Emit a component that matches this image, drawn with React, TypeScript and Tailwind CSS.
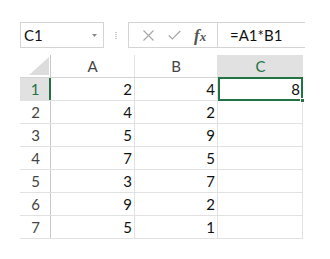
import React from "react";

const rows: [number, number][] = [
  [2, 4],
  [4, 2],
  [5, 9],
  [7, 5],
  [3, 7],
  [9, 2],
  [5, 1],
];

const font = { fontFamily: "Lato, 'Open Sans', sans-serif" };

const Toolbar: React.FC = () => (
  <div className="flex items-center h-[26px]">
    <div className="w-[84px] h-[26px] border border-[#d4d4d4] flex items-center justify-between pl-[3px] pr-[6px] text-[15px] text-[#111]">
      <span>C1</span>
      <svg width="5" height="3" viewBox="0 0 5 3">
        <path d="M0 0h5L2.5 3z" fill="#8a8a8a" />
      </svg>
    </div>
    <div className="w-[24px] flex flex-col items-center gap-[1px]">
      <span className="w-[2px] h-[1px] bg-[#c8c8c8]" />
      <span className="w-[2px] h-[1px] bg-[#c8c8c8]" />
      <span className="w-[2px] h-[1px] bg-[#c8c8c8]" />
      <span className="w-[2px] h-[1px] bg-[#c8c8c8]" />
    </div>
    <div className="w-[90px] h-[26px] border border-[#d4d4d4] flex items-center pl-[14px]">
      <svg width="11" height="11" viewBox="0 0 11 11">
        <path d="M0.5 0.5l10 10M10.5 0.5l-10 10" stroke="#a6a6a6" strokeWidth="1.1" fill="none" />
      </svg>
      <svg width="13" height="10" viewBox="0 0 13 10" className="ml-[14px]">
        <path d="M0.8 5.5l3.5 3.5 8-8" stroke="#a6a6a6" strokeWidth="1.2" fill="none" />
      </svg>
      <span className="ml-[13px] italic font-bold text-[17px] text-[#555] leading-none" style={{ fontFamily: "'Liberation Serif', serif" }}>
        f<span className="text-[13px]">x</span>
      </span>
    </div>
    <div className="w-[87px] h-[26px] border-y border-[#d4d4d4] flex items-center pl-[12px] text-[15px] text-[#111]">
      =A1*B1
    </div>
  </div>
);

const Grid: React.FC = () => (
  <div className="mt-[7px] w-[283px] text-[15px] text-[#111]">
    <div className="flex h-[23px] border-b border-[#d4d4d4]">
      <div className="w-[31px] relative border-r border-[#c8c8c8]">
        <svg width="20" height="18" viewBox="0 0 20 18" className="absolute right-[1px] bottom-[2px]">
          <path d="M20 0V18H0z" fill="#dcdcdc" />
        </svg>
      </div>
      <div className="w-[84px] border-r border-[#e1e1e1] flex items-center justify-center text-[#444]">A</div>
      <div className="w-[83px] border-r border-[#e1e1e1] flex items-center justify-center text-[#444]">B</div>
      <div className="w-[85px] bg-[#e1e1e1] flex items-center justify-center text-[#217346]">C</div>
    </div>
    {rows.map(([a, b], i) => (
      <div key={i} className="flex h-[23px] border-b border-[#e1e1e1]">
        <div
          className={
            i === 0
              ? "w-[31px] bg-[#e1e1e1] border-r-2 border-[#217346] text-[#217346] flex items-center justify-center pl-[1px]"
              : "w-[31px] border-r border-[#c8c8c8] text-[#444] flex items-center justify-center pl-[1px]"
          }
        >
          {i + 1}
        </div>
        <div className="w-[84px] border-r border-[#e1e1e1] flex items-center justify-end pr-[2px]">{a}</div>
        <div className="w-[83px] border-r border-[#e1e1e1] flex items-center justify-end pr-[2px]">{b}</div>
        {i === 0 ? (
          <div className="w-[85px] relative -mt-[1px] h-[24px] border-2 border-[#217346] flex items-center justify-end pr-[1px]">
            8
            <span className="absolute -right-[4px] -bottom-[4px] w-[5px] h-[5px] bg-[#217346] border border-white" />
          </div>
        ) : (
          <div className="w-[85px] border-r border-[#e1e1e1]" />
        )}
      </div>
    ))}
  </div>
);

export default function App() {
  return (
    <div className="w-[330px] h-[259px] bg-white pt-[22px] pl-[20px]" style={font}>
      <Toolbar />
      <Grid />
    </div>
  );
}
